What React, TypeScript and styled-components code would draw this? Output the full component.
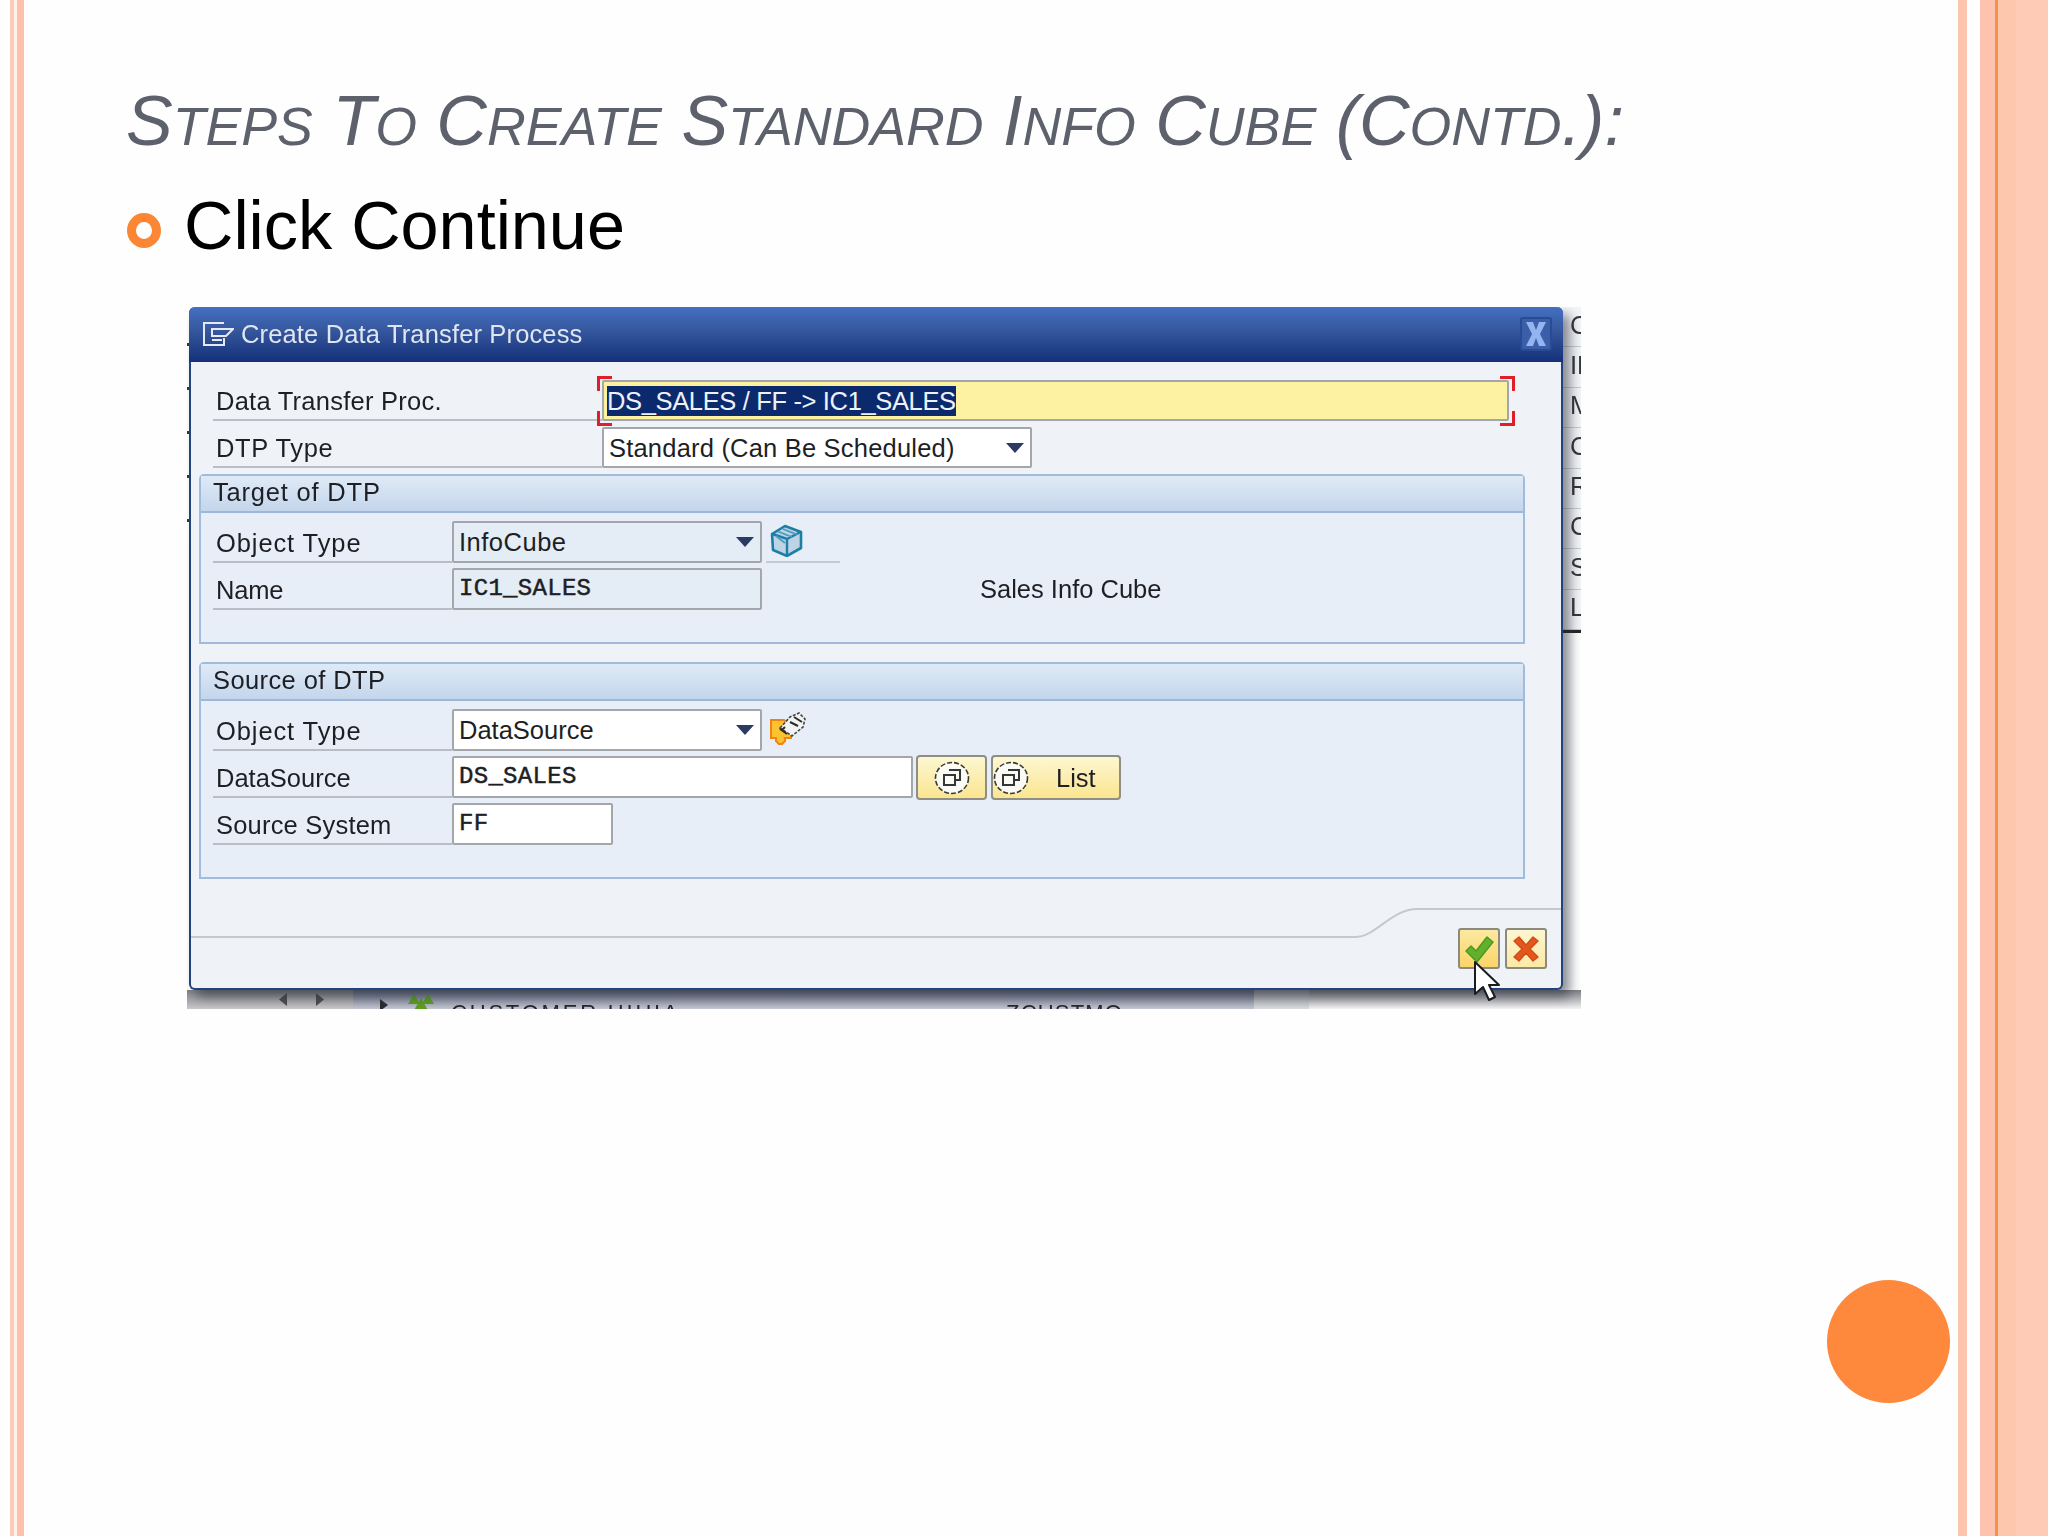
import React from "react";
import styled, { createGlobalStyle } from "styled-components";

const Global = createGlobalStyle`
  html, body { margin: 0; padding: 0; background: #fefefe; }
  body { width: 2048px; height: 1536px; overflow: hidden; font-family: "Liberation Sans", Arial, sans-serif; }
`;

const Page = styled.div`
  position: relative;
  display: flex;
  width: 2048px;
  height: 1536px;
  background: #fefefe;
  overflow: hidden;
`;
const Bands = styled.div`
  display: flex;
  flex: none;
  height: 100%;
`;
const Band = styled.div<{ $w: number; $c: string }>`
  width: ${(p) => p.$w}px;
  background: ${(p) => p.$c};
`;
const Main = styled.main`
  flex: 1;
  min-width: 0;
  padding: 81px 0 0 103px;
  filter: blur(0.5px);
`;
const Title = styled.h1`
  margin: 0 0 0 -1px;
  font: italic 400 70px/80px "Liberation Sans", Arial, sans-serif;
  color: #5d616c;
  white-space: nowrap;
`;
const Small = styled.span`
  font-size: 53.7px;
  line-height: 1;
`;
const Bullet = styled.div`
  display: flex;
  align-items: flex-start;
  gap: 23px;
  margin-top: 26px;
  font: 400 68.4px/76px "Liberation Sans", Arial, sans-serif;
  color: #000;
`;
const Ring = styled.span`
  flex: none;
  width: 34px;
  height: 35px;
  margin-top: 26px;
  box-sizing: border-box;
  border: 9px solid #fb8633;
  border-radius: 50%;
`;
const Shot = styled.div`
  display: grid;
  grid-template-columns: 2px 1374px 18px;
  grid-template-rows: 683px 19px;
  width: 1394px;
  height: 702px;
  margin: 44px 0 0 60px;
  overflow: hidden;
  font: 400 25.5px/30px "Liberation Sans", Arial, sans-serif;
  color: #1d1f24;
`;
const LeftEdge = styled.div`
  background: repeating-linear-gradient(180deg, #fff 0 36px, #34383f 36px 39px, #fff 39px 44px) no-repeat;
  background-size: 2px 240px;
`;
const Dialog = styled.section`
  position: relative;
  z-index: 1;
  display: flex;
  flex-direction: column;
  box-sizing: border-box;
  border: 2px solid #21437f;
  border-top: 0;
  border-radius: 6px;
  background: #eff3f7;
  box-shadow: 7px 7px 12px rgba(40, 44, 55, 0.55);
`;
const TitleBar = styled.header`
  flex: none;
  box-sizing: border-box;
  display: flex;
  align-items: center;
  height: 55px;
  padding: 0 11px 2px 13px;
  margin: 0 -2px;
  border-radius: 6px 6px 0 0;
  background: linear-gradient(180deg, #4470c2 0%, #37599f 40%, #14307a 100%);
  color: #dfe6f2;
`;
const TitleText = styled.span`
  margin-left: 7px;
  flex: 1;
  letter-spacing: 0.15px;
  white-space: nowrap;
`;
const Close = styled.span`
  display: flex;
  align-items: center;
  justify-content: center;
  width: 32px;
  height: 34px;
  margin-left: -2px;
  box-sizing: border-box;
  border: 2px solid #284b94;
  border-radius: 3px;
  background: #3a5ea8;
`;
const TopForm = styled.div`
  display: flex;
  flex-direction: column;
  gap: 6px;
  padding: 18px 0 0 22px;
`;
const Row = styled.div<{ $h?: number }>`
  display: flex;
  height: ${(p) => p.$h ?? 41}px;
`;
const Label = styled.div<{ $w: number; $ls?: number }>`
  flex: none;
  box-sizing: border-box;
  display: flex;
  align-items: flex-end;
  width: ${(p) => p.$w}px;
  padding: 0 0 3px 3px;
  border-bottom: 2px solid #b9bec4;
  letter-spacing: ${(p) => p.$ls ?? 0}px;
  white-space: nowrap;
`;
const Field = styled.div<{ $w: number; $bg?: string; $ls?: number }>`
  position: relative;
  flex: none;
  box-sizing: border-box;
  display: flex;
  align-items: center;
  justify-content: space-between;
  width: ${(p) => p.$w}px;
  padding: 0 6px 0 5px;
  border: 2px solid #a3a7ab;
  border-radius: 2px;
  background: ${(p) => p.$bg ?? "#fff"};
  letter-spacing: ${(p) => p.$ls ?? 0}px;
  white-space: nowrap;
`;
const Mono = styled.span`
  font: 400 24px/30px "Liberation Mono", "Courier New", monospace;
  letter-spacing: 0.3px;
  -webkit-text-stroke: 0.5px #1d1f24;
`;
const Selection = styled.span`
  margin-left: -2px;
  background: #0b2a6e;
  color: #eef1f6;
  letter-spacing: -0.35px;
`;
const Arrow = styled.span`
  flex: none;
  width: 0;
  height: 0;
  border-left: 9px solid transparent;
  border-right: 9px solid transparent;
  border-top: 10px solid #2b3a63;
`;
const Bracket = styled.span<{ $right?: boolean; $bottom?: boolean }>`
  position: absolute;
  width: 12px;
  height: 12px;
  ${(p) => (p.$right ? "right: -8px; border-right: 3px solid #e01f26;" : "left: -7px; border-left: 3px solid #e01f26;")}
  ${(p) => (p.$bottom ? "bottom: -7px; border-bottom: 3px solid #e01f26;" : "top: -6px; border-top: 3px solid #e01f26;")}
`;
const Group = styled.section<{ $h: number; $mt: number }>`
  flex: none;
  box-sizing: border-box;
  width: 1326px;
  height: ${(p) => p.$h}px;
  margin: ${(p) => p.$mt}px 0 0 8px;
  border: 2px solid #a0bbdc;
  border-radius: 5px 5px 0 0;
  background: #e7eef7;
`;
const GroupHead = styled.header<{ $ls: number }>`
  box-sizing: border-box;
  height: 37px;
  padding: 1px 0 0 12px;
  border-bottom: 2px solid #9cb7d9;
  background: linear-gradient(180deg, #dfeaf6 0%, #c4d6ec 100%);
  letter-spacing: ${(p) => p.$ls}px;
  white-space: nowrap;
`;
const GroupBody = styled.div`
  display: flex;
  flex-direction: column;
  gap: 5px;
  padding: 8px 0 0 12px;
`;
const IconCell = styled.div<{ $line?: boolean }>`
  flex: none;
  display: flex;
  align-items: flex-start;
  box-sizing: border-box;
  width: 74px;
  height: 42px;
  margin-left: 4px;
  padding-left: 4px;
  border-bottom: 2px solid ${(p) => (p.$line ? "#c3cad2" : "transparent")};
`;
const Description = styled.span`
  align-self: center;
  margin-left: 218px;
  white-space: nowrap;
`;
const PushButton = styled.button<{ $w: number; $ml: number }>`
  flex: none;
  display: flex;
  align-items: center;
  box-sizing: border-box;
  width: ${(p) => p.$w}px;
  height: 45px;
  margin: -1px 0 0 ${(p) => p.$ml}px;
  padding: 0;
  border: 2px solid #8e8e84;
  border-radius: 4px;
  background: linear-gradient(180deg, #fdf7d2 0%, #fbe590 100%);
  font: inherit;
  color: inherit;
`;
const ButtonGap = styled.span`
  width: 16px;
`;
const ButtonText = styled.span`
  margin-left: 27px;
`;
const Footer = styled.footer`
  position: relative;
  flex: 1;
  display: flex;
  align-items: flex-end;
  justify-content: flex-end;
  gap: 5px;
  padding: 0 14px 19px 0;
`;
const Divider = styled.svg`
  position: absolute;
  left: 0;
  bottom: 47px;
  width: 1370px;
  height: 36px;
`;
const IconButton = styled.span<{ $strong?: boolean }>`
  position: relative;
  display: flex;
  align-items: center;
  justify-content: center;
  box-sizing: border-box;
  width: 42px;
  height: 41px;
  border: 2px solid #8a8a7e;
  border-radius: 3px;
  background: ${(p) =>
    p.$strong ? "linear-gradient(180deg, #fbe9a0 0%, #fdd468 100%)" : "linear-gradient(180deg, #fdf6d0 0%, #fbe9a6 100%)"};
`;
const Strip = styled.div`
  display: flex;
  flex-direction: column;
  background: #fff;
`;
const StripRow = styled.div`
  flex: none;
  box-sizing: border-box;
  height: 40.4px;
  padding: 2.5px 0 0 7px;
  overflow: hidden;
  border-bottom: 1px solid #c6cbd3;
  background: #f3f5f8;
  color: #33363c;
  white-space: nowrap;
`;
const StripEnd = styled.div`
  height: 3px;
  background: #23262c;
`;
const Under = styled.div`
  grid-column: 1 / 4;
  display: flex;
  overflow: hidden;
`;
const UnderCell = styled.div<{ $w?: number; $bg: string }>`
  position: relative;
  ${(p) => (p.$w ? `flex: none; width: ${p.$w}px;` : "flex: 1;")}
  background: ${(p) => p.$bg};
  white-space: nowrap;
`;
const UnderText = styled.span<{ $left: number; $ls: number }>`
  position: absolute;
  left: ${(p) => p.$left}px;
  top: 8px;
  font-size: 22px;
  letter-spacing: ${(p) => p.$ls}px;
  color: #25272c;
`;
const OverIcon = styled.svg<{ $x: number; $y: number }>`
  position: absolute;
  left: ${(p) => p.$x}px;
  top: ${(p) => p.$y}px;
`;
const Cursor = styled.svg`
  position: absolute;
  left: 1473px;
  top: 960px;
  z-index: 3;
`;
const Dot = styled.div`
  position: absolute;
  left: 1827px;
  top: 1280px;
  width: 123px;
  height: 123px;
  border-radius: 50%;
  background: #fe883c;
`;
const IconBlock = styled.svg`
  display: block;
  margin-top: 3px;
`;

const Popup = () => (
  <svg width="36" height="34" viewBox="0 0 36 34">
    <ellipse cx="18" cy="17" rx="16.5" ry="15.5" fill="#fbfbf3" stroke="#3a3a3a" strokeWidth="1.6" strokeDasharray="5 2" />
    <path d="M15 9h11v10h-4" fill="none" stroke="#33363a" strokeWidth="2" />
    <rect x="10" y="14" width="11" height="10" fill="none" stroke="#33363a" strokeWidth="2" />
  </svg>
);

const Cube = () => (
  <IconBlock width="33" height="33" viewBox="0 0 33 33">
    <path d="M2 10 15 2l16 6v16l-14 8L3 26Z" fill="#bdd3e6" stroke="#1c7fa5" strokeWidth="2.6" strokeLinejoin="round" />
    <path d="M2.5 10 17 15l13.5-7M17 15v16" fill="none" stroke="#1c7fa5" strokeWidth="2.4" />
    <path d="M8 7.5 22 13M13 5l14 5.5M6 12l9 7" fill="none" stroke="#4f9dbe" strokeWidth="1.8" />
  </IconBlock>
);

const SourceIcon = () => (
  <IconBlock width="36" height="33" viewBox="0 0 36 33">
    <path d="M1 8h13l4 4h3v14h-6v3l-3 3h-3l-3-3v-3H1Z" fill="#fcc22f" stroke="#ef8414" strokeWidth="2" />
    <path d="M10 16 20 5l9-4 6 6-2 8-11 9Z" fill="#f2f3f3" stroke="#444" strokeWidth="1.6" strokeDasharray="3 1.5" />
    <path d="M20 10l8 4M24 5l8 5M10 17l7 5M12 18l3-3" stroke="#2b2b2b" strokeWidth="2" />
  </IconBlock>
);

const Check = () => (
  <svg width="30" height="30" viewBox="0 0 30 30">
    <path d="M2 17 7 12 12 17 23 3 29 8 13 28Z" fill="#62b02c" stroke="#4b9b22" strokeWidth="1.5" strokeLinejoin="round" />
  </svg>
);

const Cross = () => (
  <svg width="26" height="28" viewBox="0 0 26 28">
    <path d="M1 6 6 2l7 8 7-8 5 4-8 8 8 8-5 4-7-8-7 8-5-4 8-8Z" fill="#e2571c" stroke="#d24a14" strokeWidth="1.4" strokeLinejoin="round" />
  </svg>
);

export default function App() {
  return (
    <>
      <Global />
      <Page>
        <Bands>
          <Band $w={10} $c="#fefefe" />
          <Band $w={4} $c="#f9cbbb" />
          <Band $w={3} $c="#fdf1ec" />
          <Band $w={7} $c="#fdc0aa" />
        </Bands>
        <Main>
          <Title>
            S<Small>TEPS</Small> T<Small>O</Small> C<Small>REATE</Small> S<Small>TANDARD</Small> I<Small>NFO</Small> C
            <Small>UBE</Small> (C<Small>ONTD</Small>.):
          </Title>
          <Bullet>
            <Ring />
            Click Continue
          </Bullet>
          <Shot>
            <LeftEdge />
            <Dialog>
              <TitleBar>
                <svg width="32" height="24" viewBox="0 0 32 24" fill="none" stroke="#e4e9f3" strokeWidth="2">
                  <path d="M22 1H2v22h20v-7" />
                  <path d="M10 7h21l-7 7H10Z" />
                  <path d="M10 18h10" />
                </svg>
                <TitleText>Create Data Transfer Process</TitleText>
                <Close>
                  <svg width="22" height="26" viewBox="0 0 22 26">
                    <path d="M1 1h7l3 8 3-8h7l-6 12 6 12h-7l-3-8-3 8H1l6-12Z" fill="#93b4ee" />
                  </svg>
                </Close>
              </TitleBar>
              <TopForm>
                <Row>
                  <Label $w={389} $ls={0.25}>Data Transfer Proc.</Label>
                  <Field $w={907} $bg="#fdf1a2">
                    <Selection>DS_SALES / FF -&gt; IC1_SALES</Selection>
                    <Bracket />
                    <Bracket $bottom />
                    <Bracket $right />
                    <Bracket $right $bottom />
                  </Field>
                </Row>
                <Row>
                  <Label $w={389} $ls={0.6}>DTP Type</Label>
                  <Field $w={430} $ls={0.2}>
                    Standard (Can Be Scheduled)
                    <Arrow />
                  </Field>
                </Row>
              </TopForm>
              <Group $h={170} $mt={6}>
                <GroupHead $ls={0.8}>Target of DTP</GroupHead>
                <GroupBody>
                  <Row $h={42}>
                    <Label $w={239} $ls={0.9}>Object Type</Label>
                    <Field $w={310} $bg="#e4ecf5" $ls={0.5}>
                      InfoCube
                      <Arrow />
                    </Field>
                    <IconCell $line>
                      <Cube />
                    </IconCell>
                  </Row>
                  <Row $h={42}>
                    <Label $w={239} $ls={-0.2}>Name</Label>
                    <Field $w={310} $bg="#e4ecf5">
                      <Mono>IC1_SALES</Mono>
                    </Field>
                    <Description>Sales Info Cube</Description>
                  </Row>
                </GroupBody>
              </Group>
              <Group $h={217} $mt={18}>
                <GroupHead $ls={0.4}>Source of DTP</GroupHead>
                <GroupBody>
                  <Row $h={42}>
                    <Label $w={239} $ls={0.9}>Object Type</Label>
                    <Field $w={310}>
                      DataSource
                      <Arrow />
                    </Field>
                    <IconCell>
                      <SourceIcon />
                    </IconCell>
                  </Row>
                  <Row $h={42}>
                    <Label $w={239}>DataSource</Label>
                    <Field $w={461}>
                      <Mono>DS_SALES</Mono>
                    </Field>
                    <PushButton $w={71} $ml={3}>
                      <ButtonGap />
                      <Popup />
                    </PushButton>
                    <PushButton $w={130} $ml={4}>
                      <Popup />
                      <ButtonText>List</ButtonText>
                    </PushButton>
                  </Row>
                  <Row $h={42}>
                    <Label $w={239} $ls={0.2}>Source System</Label>
                    <Field $w={161}>
                      <Mono>FF</Mono>
                    </Field>
                  </Row>
                </GroupBody>
              </Group>
              <Footer>
                <Divider viewBox="0 0 1370 36" fill="none">
                  <path d="M0 32H1164C1185 32 1200 4 1226 4H1370" stroke="#c4c9ce" strokeWidth="2" />
                </Divider>
                <IconButton $strong>
                  <Check />
                </IconButton>
                <IconButton>
                  <Cross />
                </IconButton>
              </Footer>
            </Dialog>
            <Strip>
              {["C", "IN", "M", "C", "R", "C", "S", "L"].map((t, i) => (
                <StripRow key={i}>{t}</StripRow>
              ))}
              <StripEnd />
            </Strip>
            <Under>
              <UnderCell $w={166} $bg="linear-gradient(180deg, #7d7f85 0%, #c9c9cb 100%)">
                <OverIcon $x={92} $y={2} width="48" height="16" viewBox="0 0 48 16">
                  <path d="M8 1v13L0 7.5ZM37 1v13l8-6.5Z" fill="#4a4d52" />
                </OverIcon>
              </UnderCell>
              <UnderCell $w={649} $bg="linear-gradient(180deg, #5f6880 0%, #c4c8d2 100%)">
                <OverIcon $x={24} $y={9} width="14" height="12" viewBox="0 0 14 12">
                  <path d="M3 0l8 6-8 6Z" fill="#2a2c30" />
                </OverIcon>
                <OverIcon $x={54} $y={2} width="28" height="20" viewBox="0 0 28 20">
                  <path d="M7 2 13 12H1ZM21 2 27 12H15ZM14 6l8 14H6Z" fill="#5d9f1f" />
                </OverIcon>
                <UnderText $left={98} $ls={2.8}>CUSTOMER HIHIA</UnderText>
              </UnderCell>
              <UnderCell $w={252} $bg="linear-gradient(180deg, #5f6880 0%, #c4c8d2 100%)">
                <UnderText $left={4} $ls={1.2}>ZCUSTMO</UnderText>
              </UnderCell>
              <UnderCell $w={55} $bg="linear-gradient(180deg, #8f919a 0%, #dcdde0 100%)" />
              <UnderCell $bg="linear-gradient(180deg, #7b7d84 0%, #f4f4f5 100%)" />
            </Under>
          </Shot>
        </Main>
        <Bands>
          <Band $w={9} $c="#fdc5ae" />
          <Band $w={13} $c="#fefefe" />
          <Band $w={15} $c="#fdc3ae" />
          <Band $w={3} $c="#f79048" />
          <Band $w={18} $c="#fdc7ae" />
          <Band $w={32} $c="#fdcbb6" />
        </Bands>
        <Dot />
        <Cursor width="28" height="42" viewBox="0 0 28 42">
          <path d="M2 2v32l8-7 6 13 6-3-6-12h10Z" fill="#fff" stroke="#1b1c20" strokeWidth="2" strokeLinejoin="round" />
        </Cursor>
      </Page>
    </>
  );
}
